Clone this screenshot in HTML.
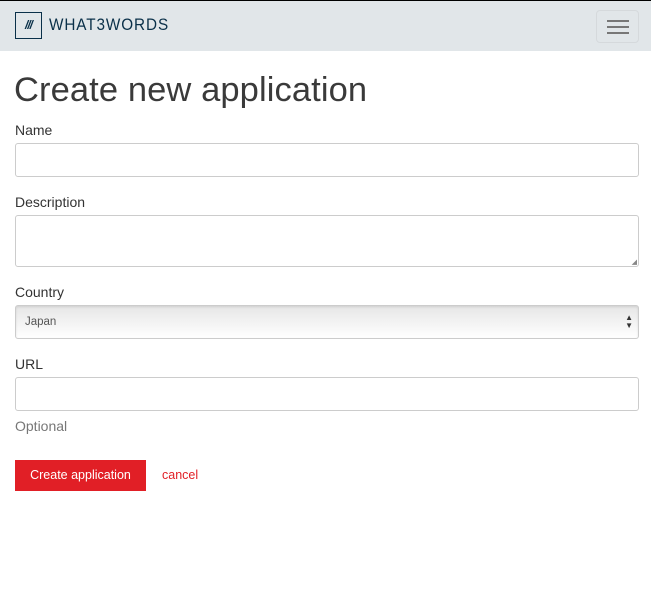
<!DOCTYPE html>
<html><head><style>
*{box-sizing:border-box;margin:0;padding:0}
body{width:651px;height:605px;background:#fff;font-family:"Liberation Sans",sans-serif;color:#333;position:relative;overflow:hidden}
.nav{position:absolute;left:0;top:0;width:651px;height:51px;background:#e1e6e9;border-top:1px solid #000}
.logo{position:absolute;left:15px;top:11px;width:27px;height:27px;border:1.5px solid #0a3049;color:#0a3049;font-size:12px;font-style:italic;font-weight:bold;text-align:center;line-height:24px;letter-spacing:-1px}
.brand{position:absolute;left:49px;top:14px;font-size:17px;letter-spacing:1px;color:#0a3049;transform:scaleX(0.9);transform-origin:left}
.burger{position:absolute;left:596px;top:9px;width:43px;height:33px;border:1px solid #d5d9dc;border-radius:4px}
.burger i{position:absolute;left:10px;width:22px;height:2px;background:#777}
h1{position:absolute;left:14px;top:71px;font-size:34.5px;font-weight:normal;color:#3a3a3a;letter-spacing:0.1px}
.lbl{position:absolute;left:15px;font-size:14px;color:#333}
.inp{position:absolute;left:15px;width:624px;border:1px solid #ccc;border-radius:3px;background:#fff}
.sel{background:linear-gradient(#e6e6e6,#fff);box-shadow:inset 0 1px 2px rgba(0,0,0,.1)}
.btn{position:absolute;left:15px;top:460px;width:131px;height:31px;background:#e11f26;color:#fff;font-size:12.5px;text-align:center;line-height:31px}
.cancel{position:absolute;left:162px;top:468px;color:#e11f26;font-size:12.5px}
</style></head><body>
<div class="nav">
<div class="logo">///</div>
<div class="brand">WHAT3WORDS</div>
<div class="burger"><i style="top:9px"></i><i style="top:15px"></i><i style="top:21px"></i></div>
</div>
<h1>Create new application</h1>
<div class="lbl" style="top:122px">Name</div>
<div class="inp" style="top:143px;height:34px"></div>
<div class="lbl" style="top:194px">Description</div>
<div class="inp" style="top:215px;height:52px"><span style="position:absolute;right:1px;bottom:0;font-size:7px;color:#888">◢</span></div>
<div class="lbl" style="top:284px">Country</div>
<div class="inp sel" style="top:305px;height:34px"><span style="position:absolute;left:9px;top:10px;font-size:11.5px;color:#555">Japan</span><span style="position:absolute;right:5px;top:8px;font-size:8px;line-height:8px;color:#333">▲<br>▼</span></div>
<div class="lbl" style="top:356px">URL</div>
<div class="inp" style="top:377px;height:34px"></div>
<div class="lbl" style="top:418px;color:#777">Optional</div>
<div class="btn">Create application</div>
<div class="cancel">cancel</div>
</body></html>
